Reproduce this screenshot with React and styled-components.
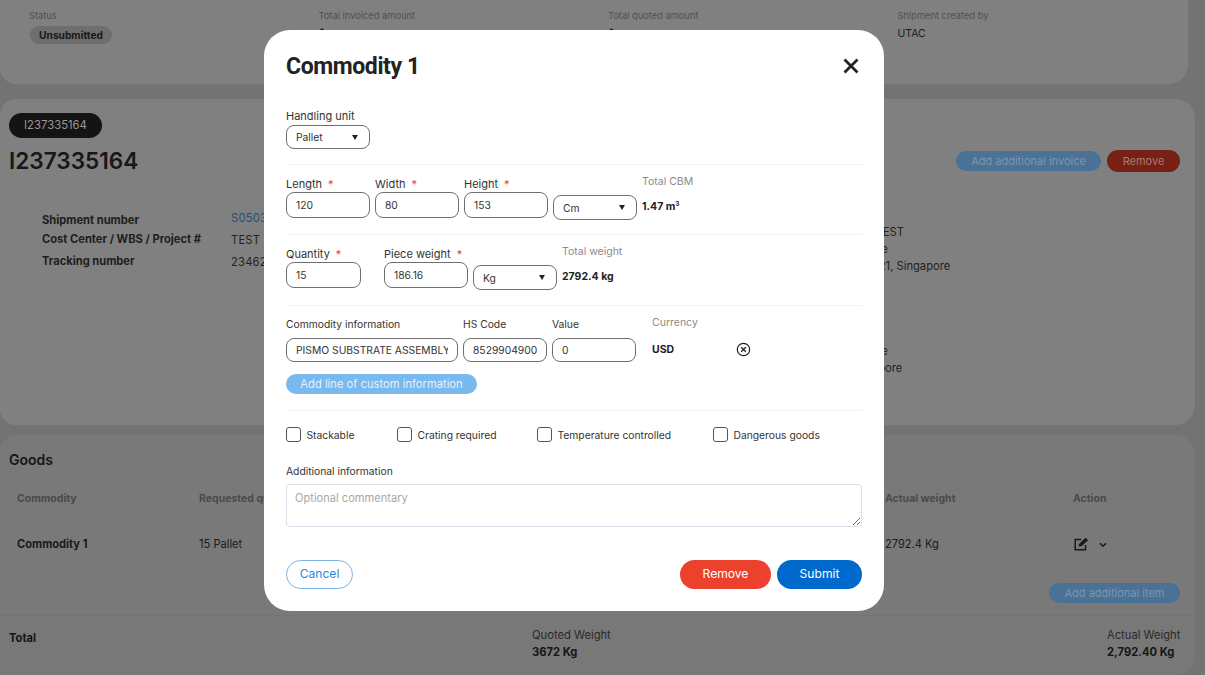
import React from "react";
import styled, { createGlobalStyle } from "styled-components";

const Global = createGlobalStyle`
  html, body { margin: 0; padding: 0; background: #737373; }
  body { font-family: Inter, "Liberation Sans", sans-serif; }
  * { box-sizing: border-box; }
`;

const Page = styled.div`
  position: relative; width: 1205px; height: 675px; overflow: hidden; background: #737373; color: #151515;
`;

/* ---------- dimmed page behind the dialog ---------- */
const SummaryCard = styled.section`
  width: 1188px; height: 84px; background: #808080; border-radius: 0 0 20px 16px;
  padding: 9px 0 0 29px; display: grid; grid-template-columns: repeat(4, 289.5px);
`;
const SummaryCol = styled.div`display: flex; flex-direction: column; align-items: flex-start;`;
const DimLabel = styled.div`font-size: 9.3px; line-height: 13px; color: #505050;`;
const DimValue = styled.div`font-size: 10.5px; line-height: 14px; margin-top: 5px; color: #1a1a1a;`;
const StatusPill = styled.div`
  margin: 4px 0 0 1px; height: 18px; width: 82px; border-radius: 9px; background: #6e6e6e; text-align: center;
  font-size: 10.2px; font-weight: 700; line-height: 18px; color: #1a1a1a;
`;
const InvoiceCard = styled.section`
  width: 1195px; height: 326px; margin-top: 15px; background: #808080; border-radius: 16px 20px 20px 16px;
  padding: 14px 15px 0 9px;
`;
const InvoicePill = styled.div`
  width: 93px; height: 25px; border-radius: 13px; background: #141414; color: #989898;
  font-size: 11.3px; line-height: 25px; text-align: center;
`;
const InvoiceHead = styled.div`display: flex; align-items: center; justify-content: space-between; margin-top: 9px; height: 28px;`;
const InvoiceTitle = styled.h1`margin: 0; font-size: 22.6px; line-height: 28px; font-weight: 600; color: #171717;`;
const DimActions = styled.div`display: flex; align-items: center; gap: 6px;`;
const DimButton = styled.div`
  height: ${(p) => p.$h}px; line-height: ${(p) => p.$h}px; width: ${(p) => p.$w}px; border-radius: 11px; text-align: center;
  font-size: 11px; background: ${(p) => p.$red ? "#762016" : "#4a7196"}; color: ${(p) => p.$red ? "#ab7a70" : "#7d97ad"};
`;
const InfoGrid = styled.div`display: grid; grid-template-columns: 189px 603px 1fr; padding-left: 33px; margin-top: 37px;`;
const InfoLabels = styled.div`font-size: 11.15px; font-weight: 700; color: #1e1e1e;`;
const InfoLabel = styled.div`height: ${(p) => p.$h}px; line-height: 16px;`;
const InfoValues = styled.div`font-size: 11.2px; color: #222; margin-top: -2px;`;
const InfoValue = styled.div`
  height: 22px; line-height: 16px; color: ${(p) => p.$link ? "#234f7f" : "#222"};
  white-space: nowrap; letter-spacing: .2px;
`;
const Address = styled.div`font-size: 11.2px; line-height: 17px; color: #222; padding-top: 12px; white-space: nowrap;`;
const AddressGap = styled.div`height: 68px;`;

const GoodsCard = styled.section`
  width: 1195px; height: 240px; margin-top: 10px; background: #797979; border-radius: 16px 20px 20px 0; position: relative;
`;
const GoodsBody = styled.div`height: 180px; padding: 16px 15px 0 9px;`;
const GoodsTitle = styled.h2`margin: 0; font-size: 14px; line-height: 18px; font-weight: 600; color: #151515;`;
const GoodsTable = styled.div`
  display: grid; grid-template-columns: 182px 686px 188px 1fr; padding-left: 8px; margin-top: 23px;
`;
const GoodsHead = styled.div`font-size: 10.5px; font-weight: 700; line-height: 14px; color: #4a4a4a; white-space: nowrap;`;
const GoodsCell = styled.div`
  font-size: 11.1px; line-height: 16px; margin-top: 30px; color: #1a1a1a; font-weight: ${(p) => p.$bold ? 700 : 400};
  display: flex; align-items: center; gap: 10px; white-space: nowrap;
`;
const EditIcon = styled.svg`width: 15px; height: 14px; margin-left: 1px; display: block;`;
const ChevronIcon = styled.svg`width: 8px; height: 6px; display: block; margin-top: 2px;`;
const GoodsActions = styled.div`display: flex; justify-content: flex-end; margin-top: 31px;`;
const TotalBand = styled.div`
  height: 60px; border-top: 1px solid #747474; background: #787878; display: grid; border-radius: 0 0 20px 0;
  grid-template-columns: 523px 575px 1fr; padding: 11px 0 0 9px; font-size: 11.2px; line-height: 17px;
`;
const TotalName = styled.div`font-weight: 700; margin-top: 3px;`;
const TotalCap = styled.div`color: #2a2a2a;`;
const TotalNum = styled.div`font-weight: 700; color: #151515;`;

/* ---------- dialog ---------- */
const Dialog = styled.div`
  position: absolute; left: 264px; top: 30px; width: 620px; height: 581px; background: #fff; border-radius: 26px;
  padding: 0 22px; color: #222;
`;
const DialogHead = styled.header`height: 78px; display: flex; align-items: flex-start; justify-content: space-between; padding-top: 22px;`;
const DialogTitle = styled.h2`
  margin: 0; font-family: Roboto, sans-serif; font-size: 23px; line-height: 30px; font-weight: 700; color: #222; letter-spacing: -.4px;
`;
const Close = styled.button`border: 0; background: none; padding: 0; margin: 0 3px 0 0; width: 16px; height: 28px; display: flex; align-items: center;`;
const Section = styled.div`
  height: ${(p) => p.$h}px; border-bottom: 1px solid #f2f2f2; padding-top: ${(p) => p.$pt ?? 11}px;
`;
const Row = styled.div`display: flex; align-items: flex-start; gap: 5px;`;
const Field = styled.label`display: block; width: ${(p) => p.$w}px; flex: none;`;
const Label = styled.div`
  font-size: ${(p) => p.$small ? 10.3 : 11}px; line-height: 16px; color: #333; height: ${(p) => p.$h ?? 16}px; white-space: nowrap;
`;
const Star = styled.span`color: #ee3b2e; margin-left: 6px;`;
const Input = styled.input`
  display: block; width: ${(p) => p.$w ? p.$w + "px" : "100%"}; height: ${(p) => p.$h ?? 26}px; margin-top: ${(p) => p.$mt ?? 0}px;
  border: 1px solid #6f6f6f; border-radius: 8px; padding: 0 9px; outline: none; background: #fff;
  font: 10.3px/1 Inter, sans-serif; color: #333;
`;
const Select = styled.div`
  width: 84px; height: ${(p) => p.$h ?? 25}px; flex: none; border: 1px solid #6f6f6f; border-radius: 8px; padding: 0 10px 0 9px;
  margin-top: ${(p) => p.$mt ?? 0}px; display: flex; align-items: center; justify-content: space-between;
  font-size: 10.3px; color: #333;
`;
const Caret = styled.svg`width: 6px; height: 5px; display: block; flex: none; margin-right: 1px;`;
const TotalCol = styled.div`flex: none;`;
const TotalLabel = styled.div`font-size: 10.5px; line-height: 12px; color: #8b8b8b; white-space: nowrap;`;
const TotalValue = styled.div`font-size: 10.5px; font-weight: 700; line-height: 14px; margin-top: ${(p) => p.$mt ?? 12}px; color: #222; white-space: nowrap;`;
const Sup = styled.sup`font-size: 6.5px; line-height: 0;`;
const CurrencyCol = styled.div`width: 79px; margin-left: 11px; margin-top: 1px; flex: none;`;
const RemoveLine = styled.button`
  border: 0; background: none; padding: 0; margin: 26px 0 0 0; width: 15px; height: 15px; flex: none;
`;
const AddLine = styled.button`
  display: block; height: 20px; width: 191px; margin-top: 12px; border: 0; border-radius: 10px; background: #7ab9ee;
  color: #e4f1fb; font: 11.2px/20px Inter, sans-serif; padding: 0;
`;
const Checks = styled.div`display: flex; padding-top: 16px; height: 52px;`;
const CheckItem = styled.label`
  display: flex; align-items: center; gap: 5.5px; width: ${(p) => p.$w}px; height: 15px; flex: none;
  font-size: 10.3px; line-height: 14px; color: #333;
`;
const Box = styled.input`
  appearance: none; margin: 0; width: 15px; height: 15px; flex: none; border: 1px solid #555; border-radius: 3px; background: #fff;
`;
const TextArea = styled.textarea`
  display: block; width: 100%; height: 43px; margin-top: 5px; border: 1px solid #d5e0ea; border-radius: 4px;
  padding: 6px 8px; outline: none; font: 11.1px/14px Inter, sans-serif; color: #333;
  &::placeholder { color: #a8a8a8; }
`;
const Footer = styled.footer`display: flex; align-items: center; margin-top: 33px; gap: 6px;`;
const Action = styled.button`
  height: 29px; width: ${(p) => p.$w}px; border-radius: 15px; padding: 0; flex: none; font: 12.1px/1 Inter, sans-serif;
  margin-right: ${(p) => p.$push ? "auto" : 0};
  border: ${(p) => p.$kind === "ghost" ? "1px solid #7ab4ea" : "0"};
  background: ${(p) => p.$kind === "red" ? "#ec412c" : p.$kind === "blue" ? "#0069cc" : "#fff"};
  color: ${(p) => p.$kind === "ghost" ? "#2f86d8" : "#fff"};
`;

const CaretIcon = () => (
  <Caret viewBox="0 0 6 5"><path d="M0 0h6L3 5z" fill="#222" /></Caret>
);

const Req = ({ children }) => <Label>{children}<Star>*</Star></Label>;

const Num = ({ label, value, w = 84, iw }) => (
  <Field $w={w}><Req>{label}</Req><Input readOnly value={value} $w={iw} /></Field>
);

export default function App() {
  return (
    <Page>
      <Global />
      <SummaryCard>
        <SummaryCol><DimLabel>Status</DimLabel><StatusPill>Unsubmitted</StatusPill></SummaryCol>
        <SummaryCol><DimLabel>Total invoiced amount</DimLabel><DimValue>$</DimValue></SummaryCol>
        <SummaryCol><DimLabel>Total quoted amount</DimLabel><DimValue>$</DimValue></SummaryCol>
        <SummaryCol><DimLabel>Shipment created by</DimLabel><DimValue>UTAC</DimValue></SummaryCol>
      </SummaryCard>

      <InvoiceCard>
        <InvoicePill>I237335164</InvoicePill>
        <InvoiceHead>
          <InvoiceTitle>I237335164</InvoiceTitle>
          <DimActions>
            <DimButton $w={145} $h={20}>Add additional invoice</DimButton>
            <DimButton $w={73} $h={22} $red>Remove</DimButton>
          </DimActions>
        </InvoiceHead>
        <InfoGrid>
          <InfoLabels>
            <InfoLabel $h={19}>Shipment number</InfoLabel>
            <InfoLabel $h={22}>Cost Center / WBS / Project #</InfoLabel>
            <InfoLabel $h={16}>Tracking number</InfoLabel>
          </InfoLabels>
          <InfoValues>
            <InfoValue $link>S0503812</InfoValue>
            <InfoValue>TEST</InfoValue>
            <InfoValue>2346212</InfoValue>
          </InfoValues>
          <Address>
            UTAC - TEST<br />Singapore<br />Rd 569021, Singapore
            <AddressGap />
            Singapore<br />12 Singapore
          </Address>
        </InfoGrid>
      </InvoiceCard>

      <GoodsCard>
        <GoodsBody>
          <GoodsTitle>Goods</GoodsTitle>
          <GoodsTable>
            <GoodsHead>Commodity</GoodsHead>
            <GoodsHead>Requested quantity</GoodsHead>
            <GoodsHead>Actual weight</GoodsHead>
            <GoodsHead>Action</GoodsHead>
            <GoodsCell $bold>Commodity 1</GoodsCell>
            <GoodsCell>15 Pallet</GoodsCell>
            <GoodsCell>2792.4 Kg</GoodsCell>
            <GoodsCell>
              <EditIcon viewBox="0 0 15 14" fill="none">
                <path d="M7 2.5H1.2v10.3h10.3V8" stroke="#1a1a1a" strokeWidth="1.5" />
                <path d="M4.5 9.6 5 7 11.5 .8l2.6 2.5L7.4 9.2z" fill="#1a1a1a" />
              </EditIcon>
              <ChevronIcon viewBox="0 0 8 6" fill="none">
                <path d="M1 1.2 4 4.2 7 1.2" stroke="#1a1a1a" strokeWidth="1.6" />
              </ChevronIcon>
            </GoodsCell>
          </GoodsTable>
          <GoodsActions><DimButton $w={131} $h={20}>Add additional item</DimButton></GoodsActions>
        </GoodsBody>
        <TotalBand>
          <TotalName>Total</TotalName>
          <div><TotalCap>Quoted Weight</TotalCap><TotalNum>3672 Kg</TotalNum></div>
          <div><TotalCap>Actual Weight</TotalCap><TotalNum>2,792.40 Kg</TotalNum></div>
        </TotalBand>
      </GoodsCard>

      <Dialog role="dialog">
        <DialogHead>
          <DialogTitle>Commodity 1</DialogTitle>
          <Close aria-label="Close">
            <svg width="16" height="16" viewBox="0 0 16 16" fill="none">
              <path d="M1.5 1.5 14.5 14.5M14.5 1.5 1.5 14.5" stroke="#222" strokeWidth="2.8" />
            </svg>
          </Close>
        </DialogHead>

        <Section $h={57} $pt={0}>
          <Label $h={17}>Handling unit</Label>
          <Select $h={24}>Pallet<CaretIcon /></Select>
        </Section>

        <Section $h={70}>
          <Row>
            <Num label="Length" value="120" />
            <Num label="Width" value="80" />
            <Num label="Height" value="153" />
            <Select $mt={19}>Cm<CaretIcon /></Select>
            <TotalCol>
              <TotalLabel>Total CBM</TotalLabel>
              <TotalValue>1.47 m<Sup>3</Sup></TotalValue>
            </TotalCol>
          </Row>
        </Section>

        <Section $h={71}>
          <Row>
            <Num label="Quantity" value="15" w={93} iw={75} />
            <Num label="Piece weight" value="186.16" />
            <Select $mt={19}>Kg<CaretIcon /></Select>
            <TotalCol>
              <TotalLabel>Total weight</TotalLabel>
              <TotalValue>2792.4 kg</TotalValue>
            </TotalCol>
          </Row>
        </Section>

        <Section $h={105} $pt={10}>
          <Row>
            <Field $w={172}><Label $small>Commodity information</Label><Input readOnly value="PISMO SUBSTRATE ASSEMBLY" $h={24} $mt={6} /></Field>
            <Field $w={84}><Label $small>HS Code</Label><Input readOnly value="8529904900" $h={24} $mt={6} /></Field>
            <Field $w={84}><Label $small>Value</Label><Input readOnly value="0" $h={24} $mt={6} /></Field>
            <CurrencyCol>
              <TotalLabel>Currency</TotalLabel>
              <TotalValue $mt={14}>USD</TotalValue>
            </CurrencyCol>
            <RemoveLine aria-label="Remove line">
              <svg width="15" height="15" viewBox="0 0 15 15" fill="none">
                <circle cx="7.5" cy="7.5" r="6.2" stroke="#222" strokeWidth="1.2" />
                <path d="M5.2 5.2 9.8 9.8M9.8 5.2 5.2 9.8" stroke="#222" strokeWidth="1.3" />
              </svg>
            </RemoveLine>
          </Row>
          <AddLine>Add line of custom information</AddLine>
        </Section>

        <Checks>
          <CheckItem $w={111}><Box type="checkbox" />Stackable</CheckItem>
          <CheckItem $w={140}><Box type="checkbox" />Crating required</CheckItem>
          <CheckItem $w={176}><Box type="checkbox" />Temperature controlled</CheckItem>
          <CheckItem $w={140}><Box type="checkbox" />Dangerous goods</CheckItem>
        </Checks>

        <div>
          <Label $small>Additional information</Label>
          <TextArea placeholder="Optional commentary" />
        </div>

        <Footer>
          <Action $kind="ghost" $w={67} $push>Cancel</Action>
          <Action $kind="red" $w={91}>Remove</Action>
          <Action $kind="blue" $w={85}>Submit</Action>
        </Footer>
      </Dialog>
    </Page>
  );
}
